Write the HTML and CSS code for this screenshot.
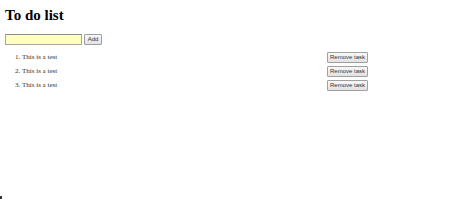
FILE: index.html
```html
<!DOCTYPE html>
<html lang="en">
<head>
    <meta charset="UTF-8">
    <title>To do list</title>
    <link rel="stylesheet" href="styles.css">
</head>
<body>
    <h1 class="title">To do list</h1>

    <div class="add-row">
        <input type="text" class="task-input">
        <button class="button add-button">Add</button>
    </div>

    <ol class="task-list">
        <li class="task">
            <span class="task-text">This is a test</span>
            <button class="button remove-button">Remove task</button>
        </li>
        <li class="task">
            <span class="task-text">This is a test</span>
            <button class="button remove-button">Remove task</button>
        </li>
        <li class="task">
            <span class="task-text">This is a test</span>
            <button class="button remove-button">Remove task</button>
        </li>
    </ol>

    <div class="corner-mark"></div>
</body>
</html>
```

FILE: styles.css
```css
body {
    margin: 0;
    padding: 5px 5px;
    font-family: "Liberation Serif", "Times New Roman", serif;
    font-size: 7px;
    color: #333;
    background-color: #fff;
    height: 200px;
    box-sizing: border-box;
}

.title {
    font-size: 15px;
    font-weight: bold;
    color: #000;
    margin: 2px 0 11px 0;
    line-height: 16px;
}

.add-row {
    display: flex;
    align-items: center;
    gap: 2px;
}

.task-input {
    width: 77px;
    height: 11px;
    box-sizing: border-box;
    margin: 0;
    padding: 0;
    border: 1px solid #a5a5a5;
    border-top-color: #8c8c8c;
    background-color: #ffffc0;
}

.button {
    font-family: "Liberation Sans", Arial, sans-serif;
    font-size: 6px;
    height: 11px;
    line-height: 9px;
    padding: 0 3px;
    margin: 0;
    border: 1px solid #a0a0a0;
    border-radius: 1px;
    background: linear-gradient(#f8f8f8, #e2e2e2);
    color: #333;
    box-sizing: border-box;
}

.add-button {
    width: 18px;
    padding: 0;
}

.task-list {
    margin: 7px 0 0 0;
    padding-left: 17px;
    width: 346px;
}

.task {
    height: 14px;
    line-height: 11px;
}

.remove-button {
    float: right;
    width: 41px;
    padding: 0;
}

.corner-mark {
    position: fixed;
    left: 0;
    bottom: 1px;
    width: 2px;
    height: 3px;
    background-color: #333;
}
```
